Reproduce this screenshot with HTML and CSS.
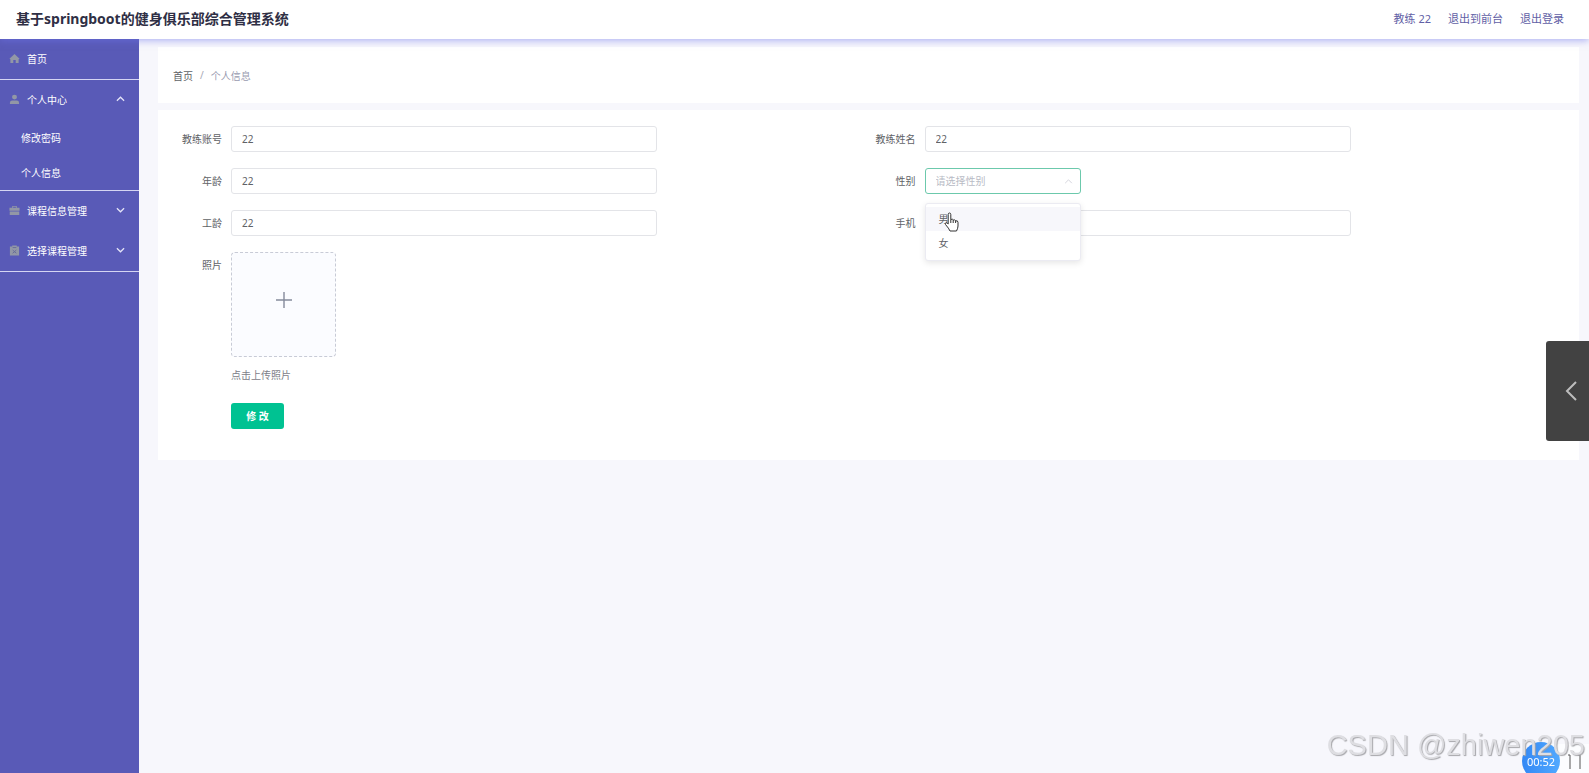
FILE: index.html
```html
<!DOCTYPE html>
<html lang="zh-CN">
<head>
  <meta charset="UTF-8">
  <meta name="viewport" content="width=device-width, initial-scale=1.0">
  <title>基于springboot的健身俱乐部综合管理系统</title>
  <link rel="stylesheet" href="styles.css">
</head>
<body>
  <header class="header">
    <h1 class="title">基于springboot的健身俱乐部综合管理系统</h1>
    <div class="header-right">
      <span>教练 22</span>
      <a href="#">退出到前台</a>
      <a href="#">退出登录</a>
    </div>
  </header>

  <div class="container">
    <nav class="sidebar">
      <div class="menu-group">
        <a class="menu-item" href="#">
          <svg class="menu-icon" viewBox="0 0 12 12"><path d="M6 1 11.5 6.2 10.5 6.7V11H7.3V7.5H4.7V11H1.5V6.7L.5 6.2Z"/></svg>
          首页
        </a>
      </div>
      <div class="menu-group">
        <button class="menu-item" type="button">
          <svg class="menu-icon" viewBox="0 0 12 12"><circle cx="6" cy="3.4" r="2.7"/><path d="M1 11V9.5Q1 7 3.5 7H8.5Q11 7 11 9.5V11Z"/></svg>
          个人中心
          <svg class="arrow" viewBox="0 0 10 6"><path d="M1 5 5 1 9 5"/></svg>
        </button>
        <a class="sub-item" href="#">修改密码</a>
        <a class="sub-item" href="#">个人信息</a>
      </div>
      <div class="menu-group">
        <button class="menu-item" type="button">
          <svg class="menu-icon" viewBox="0 0 12 12"><path d="M3.5 3V1H8.5V3H11.5V6.3H.5V3ZM4.5 3H7.5V2H4.5ZM.8 7H11.2V11H.8Z" fill-rule="evenodd"/></svg>
          课程信息管理
          <svg class="arrow" viewBox="0 0 10 6"><path d="M1 1 5 5 9 1"/></svg>
        </button>
        <button class="menu-item" type="button">
          <svg class="menu-icon" viewBox="0 0 12 12"><path d="M1 1.5H3.5V.5H8.5V1.5H11V11.5H1Z"/><path class="menu-icon-cut" d="M4 2.8H8M4 5.5 8 9M8 5.5 4 9"/></svg>
          选择课程管理
          <svg class="arrow" viewBox="0 0 10 6"><path d="M1 1 5 5 9 1"/></svg>
        </button>
      </div>
    </nav>

    <main class="main">
      <div class="card breadcrumb">
        <a href="#">首页</a>
        <span class="separator">/</span>
        <span>个人信息</span>
      </div>

      <form class="card form">
        <div class="form-item">
          <label for="account">教练账号</label>
          <div class="form-content"><input class="input" id="account" type="text" value="22"></div>
        </div>
        <div class="form-item">
          <label for="name">教练姓名</label>
          <div class="form-content"><input class="input" id="name" type="text" value="22"></div>
        </div>
        <div class="form-item">
          <label for="age">年龄</label>
          <div class="form-content"><input class="input" id="age" type="text" value="22"></div>
        </div>
        <div class="form-item">
          <label for="sex">性别</label>
          <div class="form-content">
            <div class="select-box">
              <select class="select" id="sex">
                <option value="">请选择性别</option>
                <option>男</option>
                <option>女</option>
              </select>
              <svg class="select-arrow" viewBox="0 0 10 6"><path d="M1 5 5 1 9 5"/></svg>
              <ul class="dropdown">
                <li class="hover">男</li>
                <li>女</li>
              </ul>
              <svg class="cursor" viewBox="0 0 16 20"><path d="M4.2 11V2.5Q4.2 1 5.5 1T6.8 2.5V7.5Q8.6 6.5 9.2 8 11 7.2 11.6 8.8 14 8.2 14 10.5V14Q14 16 12.5 19H6Q5 16.5 1.5 12.5 .8 11.2 2 10.7 3 10.5 4.2 12ZM6.8 7.5V11M9.2 8V11M11.6 8.8V11"/></svg>
            </div>
          </div>
        </div>
        <div class="form-item">
          <label for="years">工龄</label>
          <div class="form-content"><input class="input" id="years" type="text" value="22"></div>
        </div>
        <div class="form-item">
          <label for="phone">手机</label>
          <div class="form-content"><input class="input" id="phone" type="text"></div>
        </div>
        <div class="form-item full">
          <label for="photo">照片</label>
          <div class="form-content">
            <label class="upload" for="photo">
              <svg viewBox="0 0 16 16"><path d="M8 0V16M0 8H16"/></svg>
            </label>
            <input class="file" id="photo" type="file">
            <div class="tip">点击上传照片</div>
          </div>
        </div>
        <div class="form-item full">
          <div class="form-content no-label">
            <button class="btn" type="button">修 改</button>
          </div>
        </div>
      </form>
    </main>
  </div>

  <button class="side-tab" type="button" aria-label="展开">
    <svg viewBox="0 0 14 22"><path d="M12 2 3 11 12 20"/></svg>
  </button>

  <div class="recorder">
    <span class="time">00:52</span>
    <svg class="pause" viewBox="0 0 14 16"><path d="M1 1H3V15M11 1H13V15"/></svg>
  </div>
  <div class="watermark">CSDN @zhiwen205</div>
</body>
</html>
```

FILE: styles.css
```css
* {
  box-sizing: border-box;
}
body {
  margin: 0;
  min-height: 100vh;
  display: flex;
  flex-direction: column;
  overflow: hidden;
  background: #f7f7fc;
  color: #606266;
  font-family: "Noto Sans", "Noto Sans CJK SC", sans-serif;
  font-size: 10px;
}
a {
  color: inherit;
  text-decoration: none;
}
button, input, select {
  font: inherit;
}

/* header */
.header {
  position: relative;
  z-index: 2;
  display: flex;
  align-items: center;
  justify-content: space-between;
  height: 39px;
  padding: 0 25px 4px 16px;
  background: #fff;
  box-shadow: 0 2px 7px rgba(110, 115, 235, 0.5);
}
.title {
  margin: 0;
  color: #2f2f45;
  font-size: 14px;
  font-weight: bold;
}
.header-right {
  display: flex;
  gap: 17px;
  color: #6160a5;
  font-size: 11px;
}

.container {
  flex: 1;
  display: flex;
}

/* sidebar */
.sidebar {
  width: 139px;
  flex-shrink: 0;
  background: #595ab7;
  color: #fff;
}
.menu-group {
  border-bottom: 1px solid #d5d5f3;
}
.menu-item {
  display: flex;
  align-items: center;
  gap: 7px;
  width: 100%;
  height: 40px;
  padding: 0 14px 2px 9px;
  border: none;
  background: none;
  color: #fff;
  cursor: pointer;
}
.menu-icon {
  width: 11px;
  height: 11px;
  fill: #9297a6;
}
.menu-icon-cut {
  fill: none;
  stroke: #666a99;
}
.arrow {
  width: 9px;
  height: 6px;
  margin-left: auto;
  fill: none;
  stroke: #e4e4f8;
  stroke-width: 1.4;
}
.sub-item {
  display: flex;
  align-items: center;
  height: 35px;
  padding: 0 0 1px 21px;
}

/* content */
.main {
  flex: 1;
  padding: 8px 10px 0 19px;
}
.card {
  background: #fff;
}
.breadcrumb {
  display: flex;
  align-items: center;
  gap: 7px;
  height: 56px;
  margin-bottom: 7px;
  padding: 0 15px;
  color: #999bb0;
}
.breadcrumb a {
  color: #606266;
}
.separator {
  color: #a5a8b4;
}
.form {
  display: grid;
  grid-template-columns: 1fr 1fr;
  row-gap: 16px;
  padding: 16px 18px 31px 16px;
}
.form-item {
  display: flex;
}
.form-item > label {
  width: 57px;
  flex-shrink: 0;
  padding-right: 9px;
  line-height: 26px;
  text-align: right;
}
.form-content {
  flex: 1;
}
.no-label {
  padding-left: 57px;
}
.full {
  grid-column: 1 / -1;
}
.input, .select {
  display: block;
  height: 26px;
  padding: 0 10px;
  border: 1px solid #e3e4e8;
  border-radius: 3px;
  outline: none;
  background: #fff;
  color: #606266;
}
.input {
  width: 67%;
}
.select-box {
  position: relative;
  width: 156px;
}
.select {
  width: 100%;
  appearance: none;
  border-color: #6cc9ac;
  color: #b8bbc5;
}
.select-arrow {
  position: absolute;
  top: 11px;
  right: 8px;
  width: 9px;
  height: 5px;
  fill: none;
  stroke: #ccccd6;
}
.dropdown {
  position: absolute;
  top: 35px;
  left: 0;
  z-index: 1;
  width: 100%;
  margin: 0;
  padding: 3px 0 5px;
  border: 1px solid #ebebf2;
  border-radius: 3px;
  background: #fff;
  box-shadow: 0 2px 6px rgba(0, 0, 0, 0.1);
  list-style: none;
}
.dropdown li {
  padding: 0 13px;
  line-height: 24px;
}
.dropdown .hover {
  background: #f7f7fb;
}
.cursor {
  position: absolute;
  top: 44px;
  left: 19px;
  z-index: 2;
  width: 16px;
  height: 20px;
  fill: #fff;
  stroke: #333;
}

/* upload */
.upload {
  display: flex;
  align-items: center;
  justify-content: center;
  width: 105px;
  height: 105px;
  padding-bottom: 9px;
  border: 1px dashed #c8cbd6;
  border-radius: 4px;
  background: #fbfcff;
  cursor: pointer;
}
.upload svg {
  width: 16px;
  height: 16px;
  stroke: #858b9c;
  stroke-width: 1.4;
}
.file {
  position: absolute;
  width: 1px;
  height: 1px;
  opacity: 0;
}
.tip {
  margin: 8px 0 2px;
  line-height: 20px;
  color: #7d8088;
}
.btn {
  display: block;
  width: 53px;
  height: 26px;
  padding: 0 0 2px;
  border: none;
  border-radius: 3px;
  background: #00c292;
  color: #fff;
  font-weight: bold;
  cursor: pointer;
}

/* floating widgets */
.side-tab {
  position: fixed;
  top: 341px;
  right: 0;
  z-index: 3;
  display: flex;
  align-items: center;
  justify-content: flex-end;
  width: 43px;
  height: 100px;
  padding: 0 11px;
  border: none;
  border-radius: 3px 0 0 3px;
  background: #424242;
}
.side-tab svg {
  width: 14px;
  height: 22px;
  fill: none;
  stroke: #bdbdbd;
  stroke-width: 2;
}
.recorder {
  position: fixed;
  right: 0;
  bottom: 0;
  display: flex;
  align-items: center;
  justify-content: space-between;
  width: 48px;
  height: 29px;
  padding: 6px 8px 0 0;
  background: #fcfdff;
}
.time {
  position: absolute;
  top: -2px;
  left: -19px;
  width: 38px;
  height: 38px;
  border-radius: 50%;
  background: linear-gradient(90deg, #3388f5, #52a9ff);
  color: #fff;
  font-size: 11px;
  line-height: 40px;
  text-align: center;
}
.pause {
  width: 14px;
  height: 16px;
  margin-left: auto;
  fill: none;
  stroke: #555;
}
.watermark {
  position: fixed;
  right: 4px;
  bottom: 11px;
  color: #dedee2;
  font-family: "Liberation Sans", sans-serif;
  font-size: 29px;
  line-height: 34px;
  text-shadow: 1px 1px 1px #a6a6aa;
}
```
